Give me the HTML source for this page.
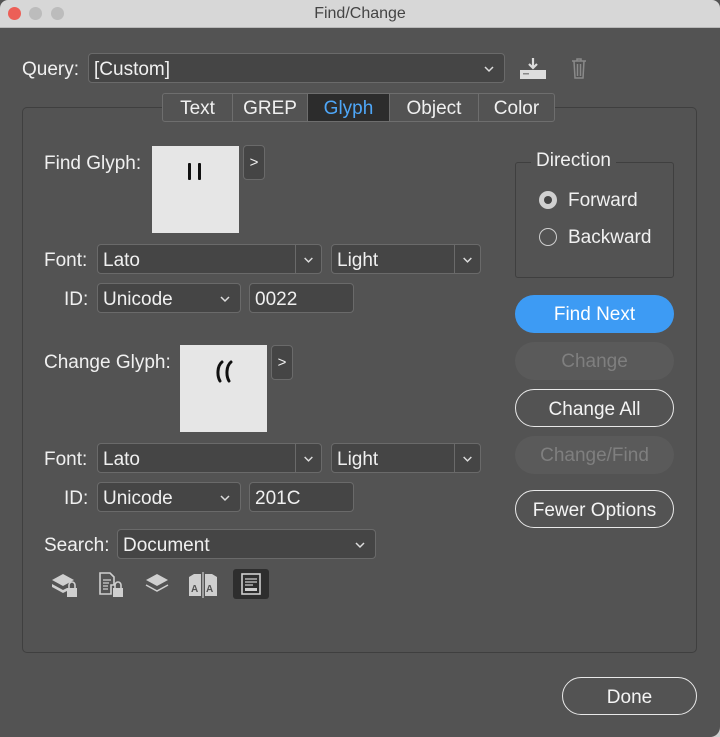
<!DOCTYPE html>
<html><head><meta charset="utf-8"><style>
*{box-sizing:border-box;margin:0;padding:0}
body{width:720px;height:737px;background:#535353;font-family:"Liberation Sans",sans-serif;color:#f0f0f0;position:relative;overflow:hidden;font-size:19px}
.a{position:absolute}
.title{left:0;top:0;width:720px;height:28px;background:#d7d7d7;border-bottom:1px solid #b8b8b8;color:#444;text-align:center;line-height:28px;font-size:16px;border-radius:8px 8px 0 0}
.dot{top:7px;width:13px;height:13px;border-radius:50%;background:#bcbcbc}
.lbl{line-height:34px;white-space:nowrap}
.dd{background:#454545;border:1px solid #6a6a6a;border-radius:4px;height:30px;line-height:31px;padding-left:5px;color:#f0f0f0}
.chev{position:absolute;top:0;width:26px;height:28px}
.sep{border-left:1px solid #6a6a6a}
.tabs{left:162px;top:93px;height:29px;width:393px;border:1px solid #6e6e6e;border-radius:3px;background:#535353;display:flex}
.tabs div{height:27px;line-height:30px;text-align:center;border-right:1px solid #6e6e6e}
.gbox{background:#e6e6e6}
.arr{background:#454545;border:1px solid #6a6a6a;border-radius:4px;width:22px;height:35px;text-align:center;line-height:33px;font-size:15px}
.btn{left:515px;width:159px;height:38px;border-radius:19px;text-align:center;line-height:40px;font-size:19px}
.out{border:1.5px solid #e8e8e8;color:#f4f4f4}
.dis{background:#5a5a5a;color:#7f7f7f}
</style></head><body>
<div class="a title">Find/Change</div>
<div class="a dot" style="left:8px;background:#ec5f57"></div>
<div class="a dot" style="left:29px"></div>
<div class="a dot" style="left:51px"></div>

<div class="a lbl" style="left:22px;top:53px">Query:</div>
<div class="a dd" style="left:88px;top:53px;width:417px">[Custom]<svg class="chev" style="right:2px" viewBox="0 0 26 28"><path d="M9 13l4 4 4-4" fill="none" stroke="#ddd" stroke-width="1.5"/></svg></div>
<svg class="a" style="left:519px;top:56px" width="28" height="24" viewBox="0 0 28 24"><path d="M14 2v9M10 8l4 4 4-4" stroke="#ddd" stroke-width="2.2" fill="none"/><rect x="1" y="14" width="26" height="9" fill="#ddd"/><rect x="4" y="17" width="6" height="1.5" fill="#888"/></svg>
<svg class="a" style="left:569px;top:56px" width="20" height="24" viewBox="0 0 20 24"><path d="M3 5h14M8 5V3h4v2M5 5l1 17h8l1-17M8.5 8v12M11.5 8v12" stroke="#8a8a8a" stroke-width="1.5" fill="none"/></svg>

<div class="a" style="left:22px;top:107px;width:675px;height:546px;border:1px solid #3f3f3f;border-radius:5px"></div>
<div class="a tabs"><div style="width:70px">Text</div><div style="width:75px">GREP</div><div style="width:82px;background:#2c2c2c;color:#4ea6f7">Glyph</div><div style="width:89px">Object</div><div style="width:75px;border-right:none">Color</div></div>

<div class="a lbl" style="left:44px;top:147px">Find Glyph:</div>
<div class="a gbox" style="left:152px;top:146px;width:87px;height:87px"><div class="a" style="left:36px;top:17px;width:3px;height:17px;background:#111;border-radius:1px"></div><div class="a" style="left:46px;top:17px;width:3px;height:17px;background:#111;border-radius:1px"></div></div>
<div class="a arr" style="left:243px;top:145px">&gt;</div>

<div class="a lbl" style="left:44px;top:244px">Font:</div>
<div class="a dd" style="left:97px;top:244px;width:225px">Lato<svg class="chev sep" style="right:0" viewBox="0 0 26 28"><path d="M9 13l4 4 4-4" fill="none" stroke="#ddd" stroke-width="1.5"/></svg></div>
<div class="a dd" style="left:331px;top:244px;width:150px">Light<svg class="chev sep" style="right:0" viewBox="0 0 26 28"><path d="M9 13l4 4 4-4" fill="none" stroke="#ddd" stroke-width="1.5"/></svg></div>
<div class="a lbl" style="left:64px;top:283px">ID:</div>
<div class="a dd" style="left:97px;top:283px;width:144px">Unicode<svg class="chev" style="right:2px" viewBox="0 0 26 28"><path d="M9 13l4 4 4-4" fill="none" stroke="#ddd" stroke-width="1.5"/></svg></div>
<div class="a dd" style="left:249px;top:283px;width:105px">0022</div>

<div class="a lbl" style="left:44px;top:346px">Change Glyph:</div>
<div class="a gbox" style="left:180px;top:345px;width:87px;height:87px"><svg class="a" style="left:34px;top:15px" width="22" height="24" viewBox="0 0 22 24"><path d="M8 2C3 6 3 16 6 21M17 2C12 6 12 16 15 21" stroke="#111" stroke-width="3" fill="none" stroke-linecap="round"/></svg></div>
<div class="a arr" style="left:271px;top:345px">&gt;</div>

<div class="a lbl" style="left:44px;top:443px">Font:</div>
<div class="a dd" style="left:97px;top:443px;width:225px">Lato<svg class="chev sep" style="right:0" viewBox="0 0 26 28"><path d="M9 13l4 4 4-4" fill="none" stroke="#ddd" stroke-width="1.5"/></svg></div>
<div class="a dd" style="left:331px;top:443px;width:150px">Light<svg class="chev sep" style="right:0" viewBox="0 0 26 28"><path d="M9 13l4 4 4-4" fill="none" stroke="#ddd" stroke-width="1.5"/></svg></div>
<div class="a lbl" style="left:64px;top:482px">ID:</div>
<div class="a dd" style="left:97px;top:482px;width:144px">Unicode<svg class="chev" style="right:2px" viewBox="0 0 26 28"><path d="M9 13l4 4 4-4" fill="none" stroke="#ddd" stroke-width="1.5"/></svg></div>
<div class="a dd" style="left:249px;top:482px;width:105px">201C</div>

<div class="a lbl" style="left:44px;top:529px">Search:</div>
<div class="a dd" style="left:117px;top:529px;width:259px">Document<svg class="chev" style="right:2px" viewBox="0 0 26 28"><path d="M9 13l4 4 4-4" fill="none" stroke="#ddd" stroke-width="1.5"/></svg></div>

<svg class="a" style="left:50px;top:571px" width="30" height="28" viewBox="0 0 30 28"><path d="M2 9l11-6 11 6-11 6z" fill="#cfcfcf"/><path d="M2 13l11 6 4-2v3l-4 2-11-6z" fill="#cfcfcf"/><rect x="17" y="17" width="10" height="9" fill="#cfcfcf"/><path d="M19 17v-3a3 3 0 0 1 6 0v3" stroke="#cfcfcf" stroke-width="1.6" fill="none"/></svg>
<svg class="a" style="left:97px;top:571px" width="30" height="28" viewBox="0 0 30 28"><path d="M3 2h10l4 4v8H14v9H3z" fill="none" stroke="#cfcfcf" stroke-width="1.6"/><path d="M6 9h8M6 12h6M6 15h5M6 18h5" stroke="#cfcfcf" stroke-width="1.3"/><rect x="16" y="17" width="10" height="9" fill="#cfcfcf"/><path d="M18 17v-3a3 3 0 0 1 6 0v3" stroke="#cfcfcf" stroke-width="1.6" fill="none"/></svg>
<svg class="a" style="left:144px;top:571px" width="26" height="26" viewBox="0 0 26 26"><path d="M2 9l11-6 11 6-11 6z" fill="#cfcfcf"/><path d="M2 14l11 6 11-6" stroke="#cfcfcf" stroke-width="1.5" fill="none"/></svg>
<svg class="a" style="left:188px;top:571px" width="30" height="28" viewBox="0 0 30 28"><path d="M1 6l5-3h7v22H1zM29 6l-5-3h-7v22h12z" fill="#cfcfcf"/><path d="M15 1v26" stroke="#cfcfcf" stroke-width="1.2"/><text x="3" y="21" font-size="10" font-family="Liberation Sans" fill="#535353" font-weight="bold">A</text><text x="18" y="21" font-size="10" font-family="Liberation Sans" fill="#535353" font-weight="bold">A</text></svg>
<div class="a" style="left:233px;top:569px;width:36px;height:30px;background:#2e2e2e;border-radius:3px"></div>
<svg class="a" style="left:240px;top:573px" width="22" height="22" viewBox="0 0 22 22"><rect x="2" y="1" width="18" height="20" fill="none" stroke="#cfcfcf" stroke-width="1.6"/><path d="M5 6h12M5 9h12M5 12h8" stroke="#cfcfcf" stroke-width="1.3"/><rect x="5" y="15" width="12" height="3" fill="#cfcfcf"/></svg>

<div class="a" style="left:515px;top:162px;width:159px;height:116px;border:1px solid #3f3f3f;border-radius:3px"></div>
<div class="a lbl" style="left:531px;top:145px;background:#535353;padding:0 5px;line-height:32px">Direction</div>
<div class="a" style="left:539px;top:191px;width:18px;height:18px;border-radius:50%;background:#d0d0d0"><div class="a" style="left:5px;top:5px;width:8px;height:8px;border-radius:50%;background:#444"></div></div>
<div class="a lbl" style="left:568px;top:184px">Forward</div>
<div class="a" style="left:539px;top:228px;width:18px;height:18px;border-radius:50%;border:1.5px solid #cfcfcf"></div>
<div class="a lbl" style="left:568px;top:221px">Backward</div>

<div class="a btn" style="top:295px;background:#3d9bf4;color:#fff">Find Next</div>
<div class="a btn dis" style="top:342px">Change</div>
<div class="a btn out" style="top:389px">Change All</div>
<div class="a btn dis" style="top:436px">Change/Find</div>
<div class="a btn out" style="top:490px">Fewer Options</div>
<div class="a btn out" style="left:562px;width:135px;top:677px">Done</div>
<div class="a" style="left:706px;top:723px;width:14px;height:14px;background:#cfcfcf"></div>
<div class="a" style="left:692px;top:709px;width:28px;height:28px;background:#535353;border-radius:0 0 10px 0"></div>
</body></html>
